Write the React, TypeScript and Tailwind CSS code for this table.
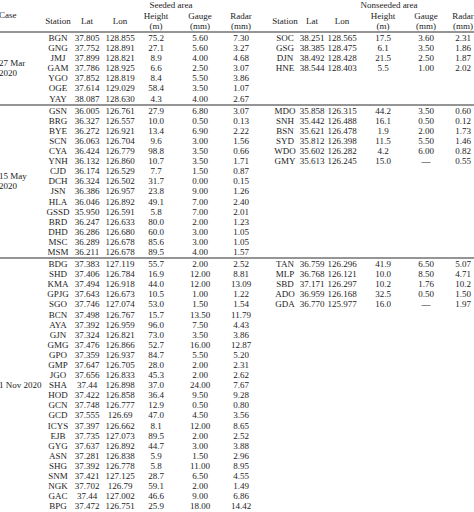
import React from 'react';

type Row = string[];

interface Section {
  label: React.ReactNode;
  seeded: Row[];
  nonseeded: Row[];
}

const sections: Section[] = [
  {
    label: (
      <>
        27 Mar
        <br />
        2020
      </>
    ),
    seeded: [
      ['BGN', '37.805', '128.855', '75.2', '5.60', '7.30'],
      ['GNG', '37.752', '128.891', '27.1', '5.60', '3.27'],
      ['JMJ', '37.899', '128.821', '8.9', '4.00', '4.68'],
      ['GAM', '37.786', '128.925', '6.6', '2.50', '3.07'],
      ['YGO', '37.852', '128.819', '8.4', '5.50', '3.86'],
      ['OGE', '37.614', '129.029', '58.4', '3.50', '1.07'],
      ['YAY', '38.087', '128.630', '4.3', '4.00', '2.67'],
    ],
    nonseeded: [
      ['SOC', '38.251', '128.565', '17.5', '3.60', '2.31'],
      ['GSG', '38.385', '128.475', '6.1', '3.50', '1.86'],
      ['DJN', '38.492', '128.428', '21.5', '2.50', '1.87'],
      ['HNE', '38.544', '128.403', '5.5', '1.00', '2.02'],
    ],
  },
  {
    label: (
      <>
        15 May
        <br />
        2020
      </>
    ),
    seeded: [
      ['GSN', '36.005', '126.761', '27.9', '6.80', '3.07'],
      ['BRG', '36.327', '126.557', '10.0', '0.50', '0.13'],
      ['BYE', '36.272', '126.921', '13.4', '6.90', '2.22'],
      ['SCN', '36.063', '126.704', '9.6', '3.00', '1.56'],
      ['CYA', '36.424', '126.779', '98.8', '3.50', '0.66'],
      ['YNH', '36.132', '126.860', '10.7', '3.50', '1.71'],
      ['CJD', '36.174', '126.529', '7.7', '1.50', '0.87'],
      ['DCH', '36.324', '126.502', '31.7', '0.00', '0.15'],
      ['JSN', '36.386', '126.957', '23.8', '9.00', '1.26'],
      ['HLA', '36.046', '126.892', '49.1', '7.00', '2.40'],
      ['GSSD', '35.950', '126.591', '5.8', '7.00', '2.01'],
      ['BRD', '36.247', '126.633', '80.0', '2.00', '1.23'],
      ['DHD', '36.286', '126.680', '60.0', '3.00', '1.05'],
      ['MSC', '36.289', '126.678', '85.6', '3.00', '1.05'],
      ['MSM', '36.211', '126.678', '89.5', '4.00', '1.57'],
    ],
    nonseeded: [
      ['MDO', '35.858', '126.315', '44.2', '3.50', '0.60'],
      ['SNH', '35.442', '126.488', '16.1', '0.50', '0.12'],
      ['BSN', '35.621', '126.478', '1.9', '2.00', '1.73'],
      ['SYD', '35.812', '126.398', '11.5', '5.50', '1.46'],
      ['WDO', '35.602', '126.282', '4.2', '6.00', '0.82'],
      ['GMY', '35.613', '126.245', '15.0', '—', '0.55'],
    ],
  },
  {
    label: '1 Nov 2020',
    seeded: [
      ['BDG', '37.383', '127.119', '55.7', '2.00', '2.52'],
      ['SHD', '37.406', '126.784', '16.9', '12.00', '8.81'],
      ['KMA', '37.494', '126.918', '44.0', '12.00', '13.09'],
      ['GPJG', '37.643', '126.673', '10.5', '1.00', '1.22'],
      ['SGO', '37.746', '127.074', '53.0', '1.50', '1.54'],
      ['BCN', '37.498', '126.767', '15.7', '13.50', '11.79'],
      ['AYA', '37.392', '126.959', '96.0', '7.50', '4.43'],
      ['GJN', '37.324', '126.821', '73.0', '3.50', '3.86'],
      ['GMG', '37.476', '126.866', '52.7', '16.00', '12.87'],
      ['GPO', '37.359', '126.937', '84.7', '5.50', '5.20'],
      ['GMP', '37.647', '126.705', '28.0', '2.00', '2.31'],
      ['JGO', '37.656', '126.833', '45.3', '2.00', '2.62'],
      ['SHA', '37.44', '126.898', '37.0', '24.00', '7.67'],
      ['HOD', '37.422', '126.858', '36.4', '9.50', '9.28'],
      ['GCN', '37.748', '126.777', '12.9', '0.50', '0.80'],
      ['GCD', '37.555', '126.69', '47.0', '4.50', '3.56'],
      ['ICYS', '37.397', '126.662', '8.1', '12.00', '8.65'],
      ['EJB', '37.735', '127.073', '89.5', '2.00', '2.52'],
      ['GYG', '37.637', '126.892', '44.7', '3.00', '3.88'],
      ['ASN', '37.281', '126.838', '5.9', '1.50', '2.96'],
      ['SHG', '37.392', '126.778', '5.8', '11.00', '8.95'],
      ['SNM', '37.421', '127.125', '28.7', '6.50', '4.55'],
      ['NGK', '37.702', '126.79', '59.1', '2.00', '1.49'],
      ['GAC', '37.44', '127.002', '46.6', '9.00', '6.86'],
      ['BPG', '37.472', '126.751', '25.9', '18.00', '14.42'],
    ],
    nonseeded: [
      ['TAN', '36.759', '126.296', '41.9', '6.50', '5.07'],
      ['MLP', '36.768', '126.121', '10.0', '8.50', '4.71'],
      ['SBD', '37.171', '126.297', '10.2', '1.76', '10.2'],
      ['ADO', '36.959', '126.168', '32.5', '0.50', '1.50'],
      ['GDA', '36.770', '125.977', '16.0', '—', '1.97'],
    ],
  },
];

// column widths, seeded then nonseeded
const seededCols = ['w-[32px]', 'w-[26px]', 'w-[40px]', 'w-[32px]', 'w-[56px]', 'w-[26px]'];
const nonseededCols = ['w-[34px]', 'w-[20px]', 'w-[40px]', 'w-[42px]', 'w-[44px]', 'w-[30px]'];

const cell = 'flex shrink-0 justify-center whitespace-nowrap';

const DataRow: React.FC<{ seeded?: Row; nonseeded?: Row }> = ({ seeded, nonseeded }) => (
  <div className="flex h-[10.1px] items-center">
    {seededCols.map((w, i) => (
      <div key={`s${i}`} className={`${cell} ${w}`}>
        {seeded ? seeded[i] : ''}
      </div>
    ))}
    <div className="w-[14px] shrink-0" />
    {nonseededCols.map((w, i) => (
      <div key={`n${i}`} className={`${cell} ${w}`}>
        {nonseeded ? nonseeded[i] : ''}
      </div>
    ))}
  </div>
);

const Rule = () => <div className="h-[2px] w-full bg-[#959595]" />;

const HeadCell: React.FC<{ w: string; lines: string[] }> = ({ w, lines }) => (
  <div className={`flex shrink-0 flex-col items-center justify-center whitespace-nowrap ${w}`}>
    {lines.map((l) => (
      <span key={l}>{l}</span>
    ))}
  </div>
);

const headLabels = [['Station'], ['Lat'], ['Lon'], ['Height', '(m)'], ['Gauge', '(mm)'], ['Radar', '(mm)']];

export default function App() {
  return (
    <div className="h-[512px] w-[474px] overflow-hidden bg-white">
      <div
        className="ml-[-1px] w-[488px] text-[9px] leading-[10.1px] text-[#1c1c1c]"
        style={{ fontFamily: '"Liberation Serif", "Times New Roman", serif' }}
      >
        {/* header */}
        <div className="flex h-[31px]">
          <div className="w-[43px] shrink-0 pt-[10px]">Case</div>
          <div className="flex flex-col">
            <div className="flex h-[11px] items-center">
              <div className="w-[32px] shrink-0" />
              <div className="flex w-[194px] shrink-0 justify-center">Seeded area</div>
              <div className="flex w-[220px] shrink-0 justify-center pl-[22px]">Nonseeded area</div>
            </div>
            <div className="flex h-[20px]">
              {seededCols.map((w, i) => (
                <HeadCell key={`hs${i}`} w={w} lines={headLabels[i]} />
              ))}
              <div className="w-[14px] shrink-0" />
              {nonseededCols.map((w, i) => (
                <HeadCell key={`hn${i}`} w={w} lines={headLabels[i]} />
              ))}
            </div>
          </div>
        </div>
        <Rule />

        {sections.map((sec, si) => (
          <React.Fragment key={si}>
            <div className="flex">
              <div className="flex w-[43px] shrink-0 items-center whitespace-nowrap">
                <span>{sec.label}</span>
              </div>
              <div className="flex flex-col">
                {sec.seeded.map((row, ri) => (
                  <DataRow key={ri} seeded={row} nonseeded={sec.nonseeded[ri]} />
                ))}
              </div>
            </div>
            {si < sections.length - 1 && <Rule />}
          </React.Fragment>
        ))}
      </div>
    </div>
  );
}
